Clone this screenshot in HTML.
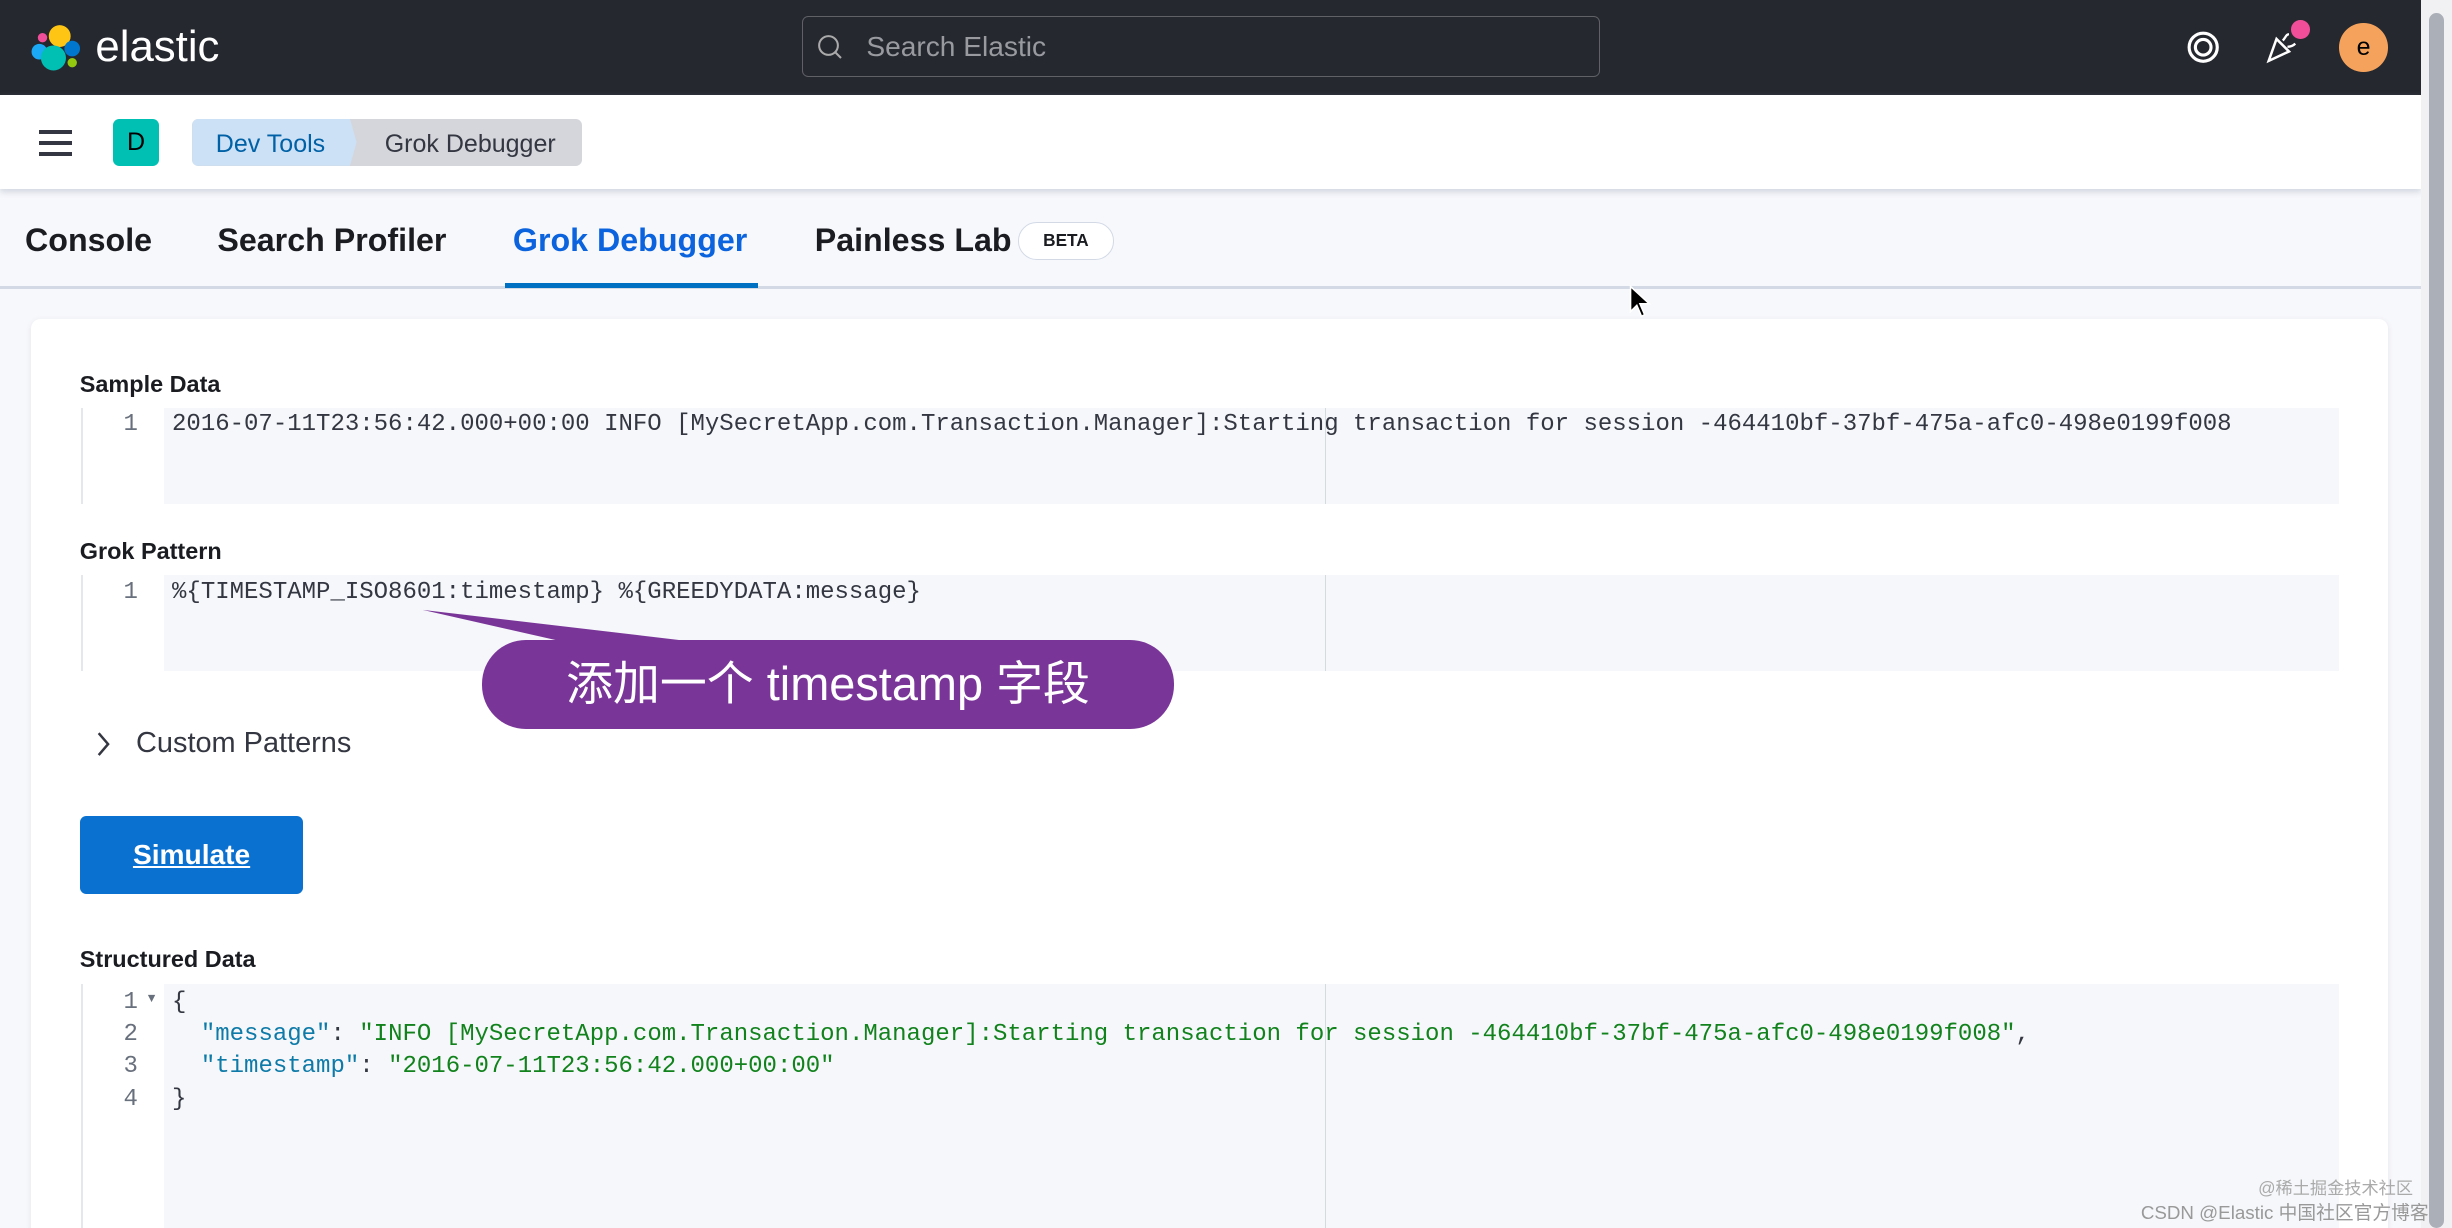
<!DOCTYPE html>
<html><head><meta charset="utf-8"><style>
html,body{margin:0;padding:0;}
body{width:2452px;height:1228px;overflow:hidden;background:#f7f8fc;}
#r{zoom:1.56378;width:1568px;height:785px;position:relative;overflow:hidden;font-family:"Liberation Sans","Noto Sans CJK SC",sans-serif;background:#f7f8fc;}
.a{position:absolute;}
.mono{font-family:"Liberation Mono","DejaVu Sans Mono",monospace;font-size:15.35px;color:#343741;white-space:pre;}
.lbl{font-weight:bold;font-size:15px;color:#1a1c21;}
.ed{background:#f5f7fa;}
.tab{font-size:20.6px;font-weight:bold;color:#1a1c21;top:142px;}
</style></head><body><div id="r">
<div class="a" style="left:0;top:0;width:1548px;height:61px;background:#25282f;"></div>
<svg class="a" style="left:19px;top:14px" width="34" height="33" viewBox="0 0 34 33">
<circle cx="19" cy="9" r="7" fill="#fec514"/><circle cx="8" cy="10" r="3" fill="#f04e98"/><circle cx="6" cy="19" r="5" fill="#1ba9f5"/><circle cx="27" cy="17" r="5" fill="#0077cc"/><circle cx="15" cy="23" r="8" fill="#00bfb3"/><circle cx="27" cy="26" r="3" fill="#93c90e"/></svg>
<div class="a" style="left:61px;top:14px;font-size:28px;color:#fff;">elastic</div>
<div class="a" style="left:513px;top:10px;width:509px;height:38px;border:1px solid #5f6167;border-radius:4px;"></div>
<svg class="a" style="left:522px;top:21px" width="18" height="18" viewBox="0 0 18 18"><circle cx="8" cy="8" r="6" fill="none" stroke="#aaa" stroke-width="1.3"/><path d="M12 12l4 4" stroke="#aaa" stroke-width="1.3"/></svg>
<div class="a" style="left:554px;top:20px;font-size:18px;color:#989aa0;">Search Elastic</div>
<svg class="a" style="left:1398px;top:19px" width="22" height="22" viewBox="0 0 22 22"><circle cx="11" cy="11" r="9" fill="none" stroke="#fff" stroke-width="2"/><circle cx="11" cy="11" r="5" fill="none" stroke="#fff" stroke-width="2"/></svg>
<svg class="a" style="left:1448px;top:18px" width="26" height="24" viewBox="0 0 26 24"><path d="M3 21l5-14 8 8z" fill="none" stroke="#fff" stroke-width="1.6"/><path d="M12 8c2-2 2-4 4-4M15 12c2 0 4-1 5-2" stroke="#fff" fill="none" stroke-width="1.5"/></svg>
<div class="a" style="left:1465px;top:13px;width:12px;height:12px;border-radius:50%;background:#f04e98;"></div>
<div class="a" style="left:1496px;top:15px;width:31px;height:31px;border-radius:50%;background:#f5a35c;color:#000;font-size:16px;text-align:center;line-height:31px;">e</div>
<div class="a" style="left:0;top:61px;width:1548px;height:60px;background:#fff;box-shadow:0 2px 4px rgba(152,162,179,.4);"></div>
<div class="a" style="left:25px;top:83px;width:21px;height:3px;background:#343741;"></div>
<div class="a" style="left:25px;top:90px;width:21px;height:3px;background:#343741;"></div>
<div class="a" style="left:25px;top:97px;width:21px;height:3px;background:#343741;"></div>
<div class="a" style="left:72px;top:76px;width:30px;height:30px;border-radius:4px;background:#00bfb3;color:#000;font-size:16px;text-align:center;line-height:30px;">D</div>
<div class="a" style="left:123px;top:76px;width:249px;height:30px;border-radius:4px;background:#d4d6db;"></div>
<div class="a" style="left:123px;top:76px;width:105px;height:30px;border-radius:4px 0 0 4px;background:#cce1f5;clip-path:polygon(0 0,96% 0,100% 50%,96% 100%,0 100%);"></div>
<div class="a" style="left:138px;top:83px;font-size:16px;color:#0061a6;">Dev Tools</div>
<div class="a" style="left:246px;top:83px;font-size:16px;color:#343741;">Grok Debugger</div>
<div class="a" style="left:0;top:183px;width:1548px;height:2px;background:#d3dae6;"></div>
<div class="a tab" style="left:16px;">Console</div>
<div class="a tab" style="left:139px;">Search Profiler</div>
<div class="a tab" style="left:328px;color:#0b64dd;">Grok Debugger</div>
<div class="a" style="left:323px;top:181px;width:162px;height:3px;background:#0071c2;"></div>
<div class="a tab" style="left:521px;">Painless Lab</div>
<div class="a" style="left:651px;top:142px;width:60px;height:23px;border:1px solid #d3dae6;border-radius:12px;background:#fff;font-size:11px;font-weight:bold;text-align:center;line-height:23px;color:#1a1c21;">BETA</div>
<div class="a" style="left:20px;top:204px;width:1507px;height:600px;background:#fff;border-radius:6px;box-shadow:0 1px 4px rgba(0,0,0,.08);"></div>
<div class="a lbl" style="left:51px;top:237px;">Sample Data</div>
<div class="a" style="left:52px;top:261px;width:1px;height:61px;background:#e4e7ec;"></div>
<div class="a ed" style="left:105px;top:261px;width:1391px;height:61px;"></div>
<div class="a" style="left:847px;top:261px;width:1px;height:61px;background:#d6d9de;"></div>
<div class="a mono" style="left:79px;top:263px;color:#69707d;">1</div>
<div class="a mono" style="left:110px;top:263px;">2016-07-11T23:56:42.000+00:00 INFO [MySecretApp.com.Transaction.Manager]:Starting transaction for session -464410bf-37bf-475a-afc0-498e0199f008</div>
<div class="a lbl" style="left:51px;top:344px;">Grok Pattern</div>
<div class="a" style="left:52px;top:368px;width:1px;height:61px;background:#e4e7ec;"></div>
<div class="a ed" style="left:105px;top:368px;width:1391px;height:61px;"></div>
<div class="a" style="left:847px;top:368px;width:1px;height:61px;background:#d6d9de;"></div>
<div class="a mono" style="left:79px;top:370px;color:#69707d;">1</div>
<div class="a mono" style="left:110px;top:370px;">%{TIMESTAMP_ISO8601:timestamp} %{GREEDYDATA:message}</div>
<svg class="a" style="left:260px;top:385px" width="200" height="40"><path d="M10 5L180 25L120 30z" fill="#7a3599"/></svg>
<div class="a" style="left:308px;top:409px;width:443px;height:57px;border-radius:28px;background:#7a3599;color:#fff;font-size:30px;text-align:center;line-height:57px;">添加一个 timestamp 字段</div>
<svg class="a" style="left:60px;top:467px" width="12" height="18"><path d="M3 2l6 7-6 7" fill="none" stroke="#343741" stroke-width="1.6"/></svg>
<div class="a" style="left:87px;top:465px;font-size:18.5px;color:#343741;">Custom Patterns</div>
<div class="a" style="left:51px;top:522px;width:143px;height:50px;border-radius:4px;background:#0b71d0;color:#fff;font-size:18px;font-weight:bold;text-align:center;line-height:50px;text-decoration:underline;">Simulate</div>
<div class="a lbl" style="left:51px;top:605px;">Structured Data</div>
<div class="a" style="left:52px;top:629px;width:1px;height:160px;background:#e4e7ec;"></div>
<div class="a ed" style="left:105px;top:629px;width:1391px;height:160px;"></div>
<div class="a" style="left:847px;top:629px;width:1px;height:160px;background:#d6d9de;"></div>
<div class="a mono" style="left:79px;top:631px;color:#69707d;line-height:20.7px;">1
2
3
4</div>
<div class="a" style="left:93px;top:634px;font-size:8px;color:#69707d;">▼</div>
<div class="a mono" style="left:110px;top:631px;line-height:20.7px;">{
  <span style="color:#0e7aa8">"message"</span>: <span style="color:#12821d">"INFO [MySecretApp.com.Transaction.Manager]:Starting transaction for session -464410bf-37bf-475a-afc0-498e0199f008"</span>,
  <span style="color:#0e7aa8">"timestamp"</span>: <span style="color:#12821d">"2016-07-11T23:56:42.000+00:00"</span>
}</div>
<div class="a" style="left:1548px;top:0;width:20px;height:785px;background:#f1f1f3;"></div>
<div class="a" style="left:1553px;top:8px;width:10px;height:777px;border-radius:5px;background:#abafb8;"></div>
<div class="a" style="left:1444px;top:751px;font-size:11px;color:#aaa;">@稀土掘金技术社区</div>
<div class="a" style="left:1369px;top:766px;font-size:12px;color:#999;">CSDN @Elastic 中国社区官方博客</div>
<svg class="a" style="left:1042px;top:182px" width="14" height="22"><path d="M1 1v16l4-4 3 7 2-1-3-7h6z" fill="#000" stroke="#fff" stroke-width="1"/></svg>
</div></body></html>
